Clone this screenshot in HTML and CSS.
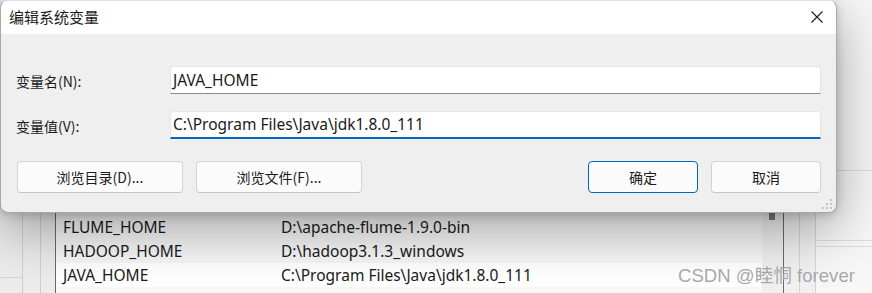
FILE: index.html
```html
<!DOCTYPE html>
<html lang="zh">
<head>
<meta charset="utf-8">
<link rel="stylesheet" href="styles.css">
</head>
<body>
<div class="bgwin">
  <div class="strip s1"><div class="hline"></div></div>
  <div class="strip s2"></div>
  <div class="strip s3"></div>
  <div class="list">
    <div class="rows">
      <div class="row"><span class="name">ECLIPSE_HOME</span><span class="val">D:\eclipse</span></div>
      <div class="row"><span class="name">FLUME_HOME</span><span class="val">D:\apache-flume-1.9.0-bin</span></div>
      <div class="row"><span class="name">HADOOP_HOME</span><span class="val">D:\hadoop3.1.3_windows</span></div>
      <div class="row sel"><span class="name">JAVA_HOME</span><span class="val">C:\Program Files\Java\jdk1.8.0_111</span></div>
    </div>
    <div class="scroll"><div class="thumb"></div></div>
  </div>
  <div class="strip s4"></div>
  <div class="strip s5"></div>
  <div class="rightarea">
    <div class="rl r1"></div>
    <div class="rl r2"></div>
    <div class="rl r3"></div>
  </div>
</div>

<div class="dialog">
  <div class="titlebar">
    <span class="title">编辑系统变量</span>
    <svg class="close" width="12" height="12" viewBox="0 0 12 12"><path d="M0.5 0.5L11.5 11.5M11.5 0.5L0.5 11.5" stroke="#1a1a1a" stroke-width="1.1" fill="none"/></svg>
  </div>
  <div class="body">
    <div class="form">
      <label class="lbl">变量名(N):</label>
      <div class="input">JAVA_HOME</div>
      <label class="lbl">变量值(V):</label>
      <div class="input focus">C:\Program Files\Java\jdk1.8.0_111</div>
    </div>
    <div class="buttons">
      <div class="btn wide">浏览目录(D)...</div>
      <div class="btn wide">浏览文件(F)...</div>
      <div class="spacer"></div>
      <div class="btn ok">确定</div>
      <div class="btn">取消</div>
    </div>
  </div>
  <svg class="grip" width="12" height="12" viewBox="0 0 12 12">
    <rect x="8" y="0" width="2" height="2" fill="#c4c4c4"/>
    <rect x="4" y="4" width="2" height="2" fill="#c4c4c4"/>
    <rect x="8" y="4" width="2" height="2" fill="#c4c4c4"/>
    <rect x="0" y="8" width="2" height="2" fill="#c4c4c4"/>
    <rect x="4" y="8" width="2" height="2" fill="#c4c4c4"/>
    <rect x="8" y="8" width="2" height="2" fill="#c4c4c4"/>
  </svg>
</div>

<div class="watermark">CSDN @睦恫 forever</div>
</body>
</html>
```
FILE: styles.css
```css
html, body {
  margin: 0;
  padding: 0;
  width: 872px;
  height: 293px;
  overflow: hidden;
}
body {
  font-family: "Noto Sans", "Noto Sans CJK SC", sans-serif;
  color: #1a1a1a;
  position: relative;
  background: #f3f3f3;
}

/* background window */
.bgwin {
  display: flex;
  height: 293px;
  background: #f3f3f3;
}
.strip { flex: none; height: 100%; position: relative; }
.s1 { width: 22px; border-right: 1px solid #cfcfcf; background: #ececec; }
.s1 .hline { position: absolute; left: 0; right: 0; top: 277px; border-top: 1px solid #d6d6d6; }
.s2 { width: 17px; border-right: 1px solid #d0d0d0; background: #ececec; }
.s3 { width: 14px; border-right: 1px solid #6a6a6a; background: #ececec; }
.list {
  flex: none;
  width: 727px;
  border-right: 1px solid #6a6a6a;
  display: flex;
  background: #f8f8f8;
}
.rows {
  flex: 1;
  padding-top: 191px;
}
.row {
  height: 24px;
  display: flex;
  align-items: center;
  font-size: 15.5px;
  padding-left: 7px;
}
.row.sel { background: #ffffff; }
.row .name { width: 218px; }
.scroll {
  width: 21px;
  background: #f0f0f0;
  position: relative;
}
.thumb {
  position: absolute;
  left: 7px;
  top: 213px;
  width: 6px;
  height: 7px;
  background: #7a7a7a;
}
.s4 { width: 15px; border-right: 1px solid #d6d6d6; background: #f1f1f1; }
.s5 { width: 15px; border-right: 1px solid #d6d6d6; background: #f1f1f1; }
.rightarea { flex: 1; position: relative; background: #f7f7f7; }
.rl { position: absolute; left: 0; right: 0; border-top: 1px solid #dedede; }
.r1 { top: 170px; }
.r2 { top: 240px; }
.r3 { top: 246px; }

/* dialog */
.dialog {
  position: absolute;
  left: 0;
  top: 0;
  width: 835px;
  height: 211px;
  border: 1px solid #a8a8a8;
  border-top-color: #e0e0e0;
  border-radius: 8px;
  background: #efefef;
  overflow: hidden;
  box-shadow: 0 16px 56px rgba(0,0,0,0.36), 0 2px 10px rgba(0,0,0,0.18);
}
.titlebar {
  height: 33px;
  background: #ffffff;
  display: flex;
  align-items: center;
  justify-content: space-between;
  padding: 0 13px 0 8px;
}
.title { font-size: 15px; font-family: "Noto Sans CJK SC", sans-serif; margin-top: -2px; }
.close { margin-top: -1px; }
.body {
  padding: 32px 15px 0 15px;
}
.form {
  display: grid;
  grid-template-columns: 154px 651px;
  row-gap: 17px;
  align-items: center;
}
.lbl { font-size: 14px; font-family: "Noto Sans CJK SC", sans-serif; padding-top: 1px; }
.input {
  background: #ffffff;
  border: 1px solid #e6e6e6;
  border-bottom: 1px solid #8a8a8a;
  border-radius: 3px 3px 0 0;
  box-sizing: border-box;
  height: 28px;
  font-size: 15.5px;
  line-height: 26px;
  padding-left: 2px;
  white-space: nowrap;
}
.input.focus {
  border-bottom: 2px solid #0067c0;
  line-height: 25px;
}
.buttons {
  display: flex;
  gap: 13px;
  margin-top: 22px;
  padding-left: 1px;
}
.spacer { flex: 1; }
.btn {
  width: 110px;
  height: 32px;
  box-sizing: border-box;
  border: 1px solid #d3d3d3;
  border-bottom-color: #c4c4c4;
  border-radius: 4px;
  background: #fbfbfb;
  font-size: 14px;
  font-family: "Noto Sans CJK SC", sans-serif;
  display: flex;
  align-items: center;
  justify-content: center;
}
.btn.wide { width: 166px; }
.btn.ok { border-color: #0067c0; }
.grip {
  position: absolute;
  right: 2px;
  bottom: 1px;
}

.watermark {
  position: absolute;
  left: 678px;
  top: 260px;
  font-family: "Liberation Sans", "Noto Sans CJK SC", sans-serif;
  font-size: 18.6px;
  color: rgba(140,145,150,0.8);
  text-shadow: 0 0 1px rgba(255,255,255,0.6);
  white-space: nowrap;
}
```
